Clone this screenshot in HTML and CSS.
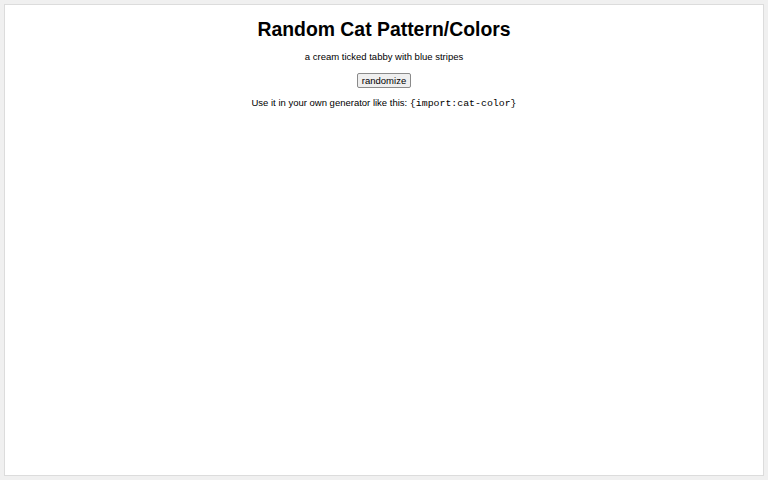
FILE: index.html
```html
<!DOCTYPE html>
<html>
  <head>
    <meta charset="UTF-8" />
    <title>Random Cat Pattern/Colors</title>
    <link rel="stylesheet" href="styles.css">
  </head>
  <body>
    <div class="frame">
      <h1 class="title">Random Cat Pattern/Colors</h1>
      <p class="result" id="result">a cream ticked tabby with blue stripes</p>
      <button class="randomize" id="randomize">randomize</button>
      <p class="usage">Use it in your own generator like this: <code>{import:cat-color}</code></p>
    </div>
  </body>
</html>
```

FILE: styles.css
```css
* {
  box-sizing: border-box;
}

html, body {
  margin: 0;
  padding: 0;
}

body {
  background: #f0f0f0;
  font-family: 'Liberation Sans', Arial, sans-serif;
  color: #000;
  padding: 4px;
}

.frame {
  background: #fff;
  border: 1px solid #dcdcdc;
  height: 472px;
  display: flex;
  flex-direction: column;
  align-items: center;
  padding-top: 13px;
}

.title {
  font-size: 19.4px;
  font-weight: bold;
  margin: 0 0 10px;
  line-height: 22px;
}

.result {
  font-size: 9.5px;
  margin: 0 0 10px;
  line-height: 13px;
}

.randomize {
  font-family: 'Liberation Sans', Arial, sans-serif;
  font-size: 9.5px;
  line-height: 11px;
  padding: 1px 4px;
  background: #efefef;
  border: 1px solid #8a8a8a;
  border-radius: 2px;
  margin-bottom: 8px;
}

.usage {
  font-size: 9.5px;
  margin: 0;
  line-height: 13px;
}

.usage code {
  font-family: 'Liberation Mono', 'Courier New', monospace;
  font-size: 9.9px;
}
```
